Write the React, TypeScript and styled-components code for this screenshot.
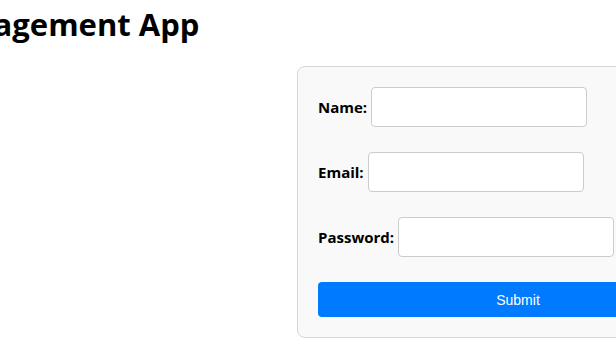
import styled, { createGlobalStyle } from "styled-components";

const GlobalStyle = createGlobalStyle`
  html, body {
    margin: 0;
    padding: 0;
    background: #fff;
    overflow: hidden;
  }
  body {
    font-family: "Open Sans", "Noto Sans", sans-serif;
    color: #000;
  }
`

// the shot is a crop of a wider page, so the page is shifted left
const Page = styled.div`
  width: 1000px;
  margin-left: -154px;
  padding-top: 3px;
`

const Title = styled.h1`
  margin: 0;
  font-size: 31px;
  font-weight: 700;
  line-height: 43px;
`

const Card = styled.form`
  box-sizing: border-box;
  width: 442px;
  margin: 20px 0 0 451px;
  padding: 20px;
  background: #f9f9f9;
  border: 1px solid #d6d6d6;
  border-radius: 8px;
`

const Row = styled.div`
  display: flex;
  align-items: center;
  gap: 4px;
  margin-bottom: 25px;
`

const Label = styled.label`
  font-size: 15px;
  font-weight: 700;
`

const Input = styled.input`
  box-sizing: border-box;
  width: 216px;
  height: 40px;
  padding: 8px;
  border: 1px solid #ccc;
  border-radius: 4px;
  background: #fff;
  font-size: 14px;
`

const Button = styled.button`
  display: block;
  width: 100%;
  height: 35px;
  border: none;
  border-radius: 4px;
  background: #007bff;
  color: #fff;
  font-family: "Liberation Sans", Arial, sans-serif;
  font-size: 14px;
  cursor: pointer;
`

const fields = [
    {id: "name", label: "Name:", type: "text"},
    {id: "email", label: "Email:", type: "email"},
    {id: "password", label: "Password:", type: "password"},
]

const App = () => {
    return (
        <>
            <GlobalStyle/>
            <Page>
                <Title>User Management App</Title>
                <Card onSubmit={(e) => e.preventDefault()}>
                    {fields.map((f) => (
                        <Row key={f.id}>
                            <Label htmlFor={f.id}>{f.label}</Label>
                            <Input id={f.id} type={f.type}/>
                        </Row>
                    ))}
                    <Button type="submit">Submit</Button>
                </Card>
            </Page>
        </>
    )
}
export default App
